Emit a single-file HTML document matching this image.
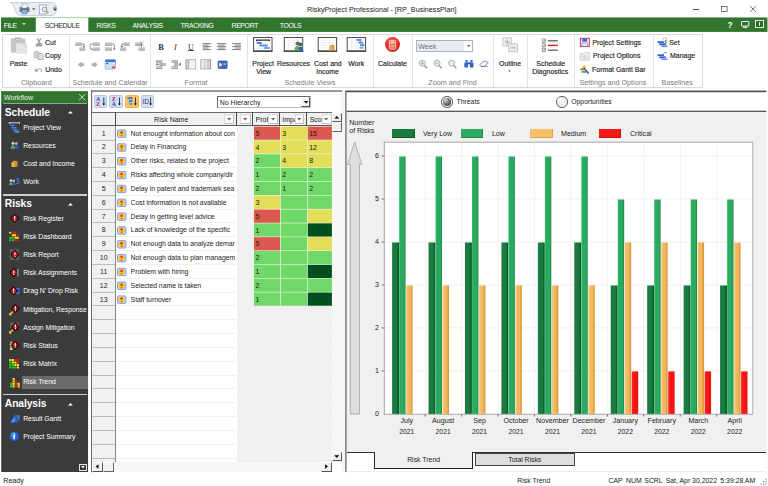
<!DOCTYPE html>
<html><head><meta charset="utf-8"><title>RiskyProject Professional - [RP_BusinessPlan]</title>
<style>
html,body{margin:0;padding:0;}
body{width:768px;height:486px;position:relative;overflow:hidden;background:#fff;font-family:"Liberation Sans",sans-serif;}
div{position:absolute;box-sizing:border-box;}
.t{white-space:nowrap;height:12px;line-height:12px;}
svg{position:absolute;overflow:visible;}
</style></head><body>

<svg style="left:8px;top:1px" width="52" height="16" viewBox="0 0 52 16"><path d="M2.5 1.5 H43 Q48.5 1.5 48.5 8 Q48.5 14.5 43 14.5 H12.5 Q9 14.5 7.5 10 Q6 3.5 2.5 1.5Z" fill="#e8edf4" stroke="#bcc5d2" stroke-width="0.8"/><rect x="11.6" y="6" width="9.8" height="5.2" rx="1" fill="#6f7784"/><rect x="14" y="3" width="5" height="4" fill="#f4f6fa" stroke="#8892a2" stroke-width="0.5"/><rect x="14" y="9" width="5" height="4" fill="#7fb4ee" stroke="#6a7688" stroke-width="0.4"/><path d="M24 7.3h3.6l-1.8 1.9z" fill="#666"/><rect x="31.5" y="4" width="7" height="9" fill="#fdfdfd" stroke="#8a98b4" stroke-width="0.7"/><circle cx="36.5" cy="8.5" r="2.4" fill="#dfeefc" stroke="#6a7890" stroke-width="0.7"/><path d="M38.2 10.3l2 2" stroke="#e8a030" stroke-width="1.3"/><path d="M45.5 6.2h3M45.5 7.8h3l-1.5 2z" stroke="#444" stroke-width="0.6" fill="#444"/></svg>
<div class="t" style="left:307px;top:4px;font-size:7.2px;color:#222;width:148.5px;text-align:center;">RiskyProject Professional - [RP_BusinessPlan]</div>
<div style="left:693px;top:9px;width:6.2px;height:0.8px;background:#5a5a5a"></div>
<svg style="left:720.8px;top:5.8px" width="6.5" height="6" viewBox="0 0 6.5 6"><rect x="0.4" y="0.4" width="5.7" height="5.2" fill="none" stroke="#4a4a4a" stroke-width="0.75"/></svg>
<svg style="left:750px;top:5.8px" width="6" height="6" viewBox="0 0 6 6"><path d="M0 0L5.9 5.9M5.9 0L0 5.9" stroke="#444" stroke-width="0.75" fill="none"/></svg>
<svg style="left:0px;top:0px" width="768" height="40" viewBox="0 0 768 40"><rect x="1" y="17.45" width="766.5" height="14.45" fill="#31752f"/><rect x="35.8" y="17.4" width="52.5" height="16" fill="#fff"/><rect x="35.8" y="17.4" width="52.5" height="0.7" fill="#a4c8a2"/></svg>
<div class="t" style="left:-0.8px;top:20px;font-size:6.9px;color:#fff;width:22.1px;text-align:center;letter-spacing:-0.35px;">FILE</div>
<div class="t" style="left:40.4px;top:20px;font-size:6.9px;color:#222;width:43.4px;text-align:center;letter-spacing:-0.35px;">SCHEDULE</div>
<div class="t" style="left:92.5px;top:20px;font-size:6.9px;color:#fff;width:27.1px;text-align:center;letter-spacing:-0.35px;">RISKS</div>
<div class="t" style="left:128.3px;top:20px;font-size:6.9px;color:#fff;width:38.7px;text-align:center;letter-spacing:-0.35px;">ANALYSIS</div>
<div class="t" style="left:175.8px;top:20px;font-size:6.9px;color:#fff;width:42.2px;text-align:center;letter-spacing:-0.35px;">TRACKING</div>
<div class="t" style="left:227px;top:20px;font-size:6.9px;color:#fff;width:35.5px;text-align:center;letter-spacing:-0.35px;">REPORT</div>
<div class="t" style="left:274.8px;top:20px;font-size:6.9px;color:#fff;width:31.5px;text-align:center;letter-spacing:-0.35px;">TOOLS</div>
<svg style="left:22.2px;top:23.3px" width="4" height="2.5" viewBox="0 0 4 2.5"><path d="M0 0H4L2 2.5Z" fill="#b9d3b8"/></svg>
<div class="t" style="left:727.5px;top:19px;font-size:8.3px;color:#fff;width:5px;text-align:center;font-weight:bold;">?</div>
<svg style="left:740.5px;top:21px" width="9" height="7" viewBox="0 0 9 7"><rect x="0.5" y="0.5" width="7.4" height="4.6" rx="0.6" fill="#2d6f2c" stroke="#fff" stroke-width="1"/><path d="M4.2 5.2V6.4M2 6.6H6.4" stroke="#fff" stroke-width="0.9"/></svg>
<div style="left:754.7px;top:19.7px;width:9.6px;height:8.4px;border:1px solid #e4eee4;background:#2b6a2a"></div>
<div style="left:758.9px;top:21.6px;width:1.2px;height:4.8px;background:#f0e6b0"></div>
<div style="left:2px;top:34px;width:700.8px;height:53.7px;background:#fff;border:1px solid #dadada"></div>
<div style="left:69.3px;top:35px;width:1px;height:51.7px;background:#e4e4e4"></div>
<div style="left:149.8px;top:35px;width:1px;height:51.7px;background:#e4e4e4"></div>
<div style="left:247.2px;top:35px;width:1px;height:51.7px;background:#e4e4e4"></div>
<div style="left:373.1px;top:35px;width:1px;height:51.7px;background:#e4e4e4"></div>
<div style="left:412.4px;top:35px;width:1px;height:51.7px;background:#e4e4e4"></div>
<div style="left:493.1px;top:35px;width:1px;height:51.7px;background:#e4e4e4"></div>
<div style="left:527px;top:35px;width:1px;height:51.7px;background:#e4e4e4"></div>
<div style="left:574px;top:35px;width:1px;height:51.7px;background:#e4e4e4"></div>
<div style="left:652.6px;top:35px;width:1px;height:51.7px;background:#e4e4e4"></div>
<div class="t" style="left:15.6px;top:77px;font-size:7.2px;color:#7a7a7a;width:41.4px;text-align:center;">Clipboard</div>
<div class="t" style="left:68px;top:77px;font-size:7.2px;color:#7a7a7a;width:84px;text-align:center;">Schedule and Calendar</div>
<div class="t" style="left:178px;top:77px;font-size:7.2px;color:#7a7a7a;width:36px;text-align:center;">Format</div>
<div class="t" style="left:280px;top:77px;font-size:7.2px;color:#7a7a7a;width:60px;text-align:center;">Schedule Views</div>
<div class="t" style="left:423px;top:77px;font-size:7.2px;color:#7a7a7a;width:59px;text-align:center;">Zoom and Find</div>
<div class="t" style="left:573.5px;top:77px;font-size:7.2px;color:#7a7a7a;width:78.8px;text-align:center;">Settings and Options</div>
<div class="t" style="left:657.7px;top:77px;font-size:7.2px;color:#7a7a7a;width:39.0px;text-align:center;">Baselines</div>
<div class="t" style="left:5px;top:58px;font-size:6.95px;color:#1e1e1e;width:27px;text-align:center;-webkit-text-stroke:0.15px #1e1e1e;">Paste</div>
<div class="t" style="left:40px;top:37px;font-size:6.95px;color:#1e1e1e;width:21px;text-align:center;-webkit-text-stroke:0.15px #1e1e1e;">Cut</div>
<div class="t" style="left:40px;top:50px;font-size:6.95px;color:#1e1e1e;width:26px;text-align:center;-webkit-text-stroke:0.15px #1e1e1e;">Copy</div>
<div class="t" style="left:40px;top:64px;font-size:6.95px;color:#1e1e1e;width:27px;text-align:center;-webkit-text-stroke:0.15px #1e1e1e;">Undo</div>
<div class="t" style="left:247.5px;top:58px;font-size:6.95px;color:#1e1e1e;width:31.2px;text-align:center;-webkit-text-stroke:0.15px #1e1e1e;">Project</div>
<div class="t" style="left:250.7px;top:66px;font-size:6.95px;color:#1e1e1e;width:25.8px;text-align:center;-webkit-text-stroke:0.15px #1e1e1e;">View</div>
<div class="t" style="left:272.5px;top:58px;font-size:6.95px;color:#1e1e1e;width:42.0px;text-align:center;-webkit-text-stroke:0.15px #1e1e1e;">Resources</div>
<div class="t" style="left:308.7px;top:58px;font-size:6.95px;color:#1e1e1e;width:38.3px;text-align:center;-webkit-text-stroke:0.15px #1e1e1e;">Cost and</div>
<div class="t" style="left:311.2px;top:66px;font-size:6.95px;color:#1e1e1e;width:32.8px;text-align:center;-webkit-text-stroke:0.15px #1e1e1e;">Income</div>
<div class="t" style="left:342.5px;top:58px;font-size:6.95px;color:#1e1e1e;width:27.5px;text-align:center;-webkit-text-stroke:0.15px #1e1e1e;">Work</div>
<div class="t" style="left:373.2px;top:58px;font-size:6.95px;color:#1e1e1e;width:38.6px;text-align:center;-webkit-text-stroke:0.15px #1e1e1e;">Calculate</div>
<div class="t" style="left:493.2px;top:58px;font-size:6.95px;color:#1e1e1e;width:33.8px;text-align:center;-webkit-text-stroke:0.15px #1e1e1e;">Outline</div>
<div class="t" style="left:532px;top:58px;font-size:6.95px;color:#1e1e1e;width:37.5px;text-align:center;-webkit-text-stroke:0.15px #1e1e1e;">Schedule</div>
<div class="t" style="left:526.5px;top:66px;font-size:6.95px;color:#1e1e1e;width:47.5px;text-align:center;-webkit-text-stroke:0.15px #1e1e1e;">Diagnostics</div>
<div class="t" style="left:586.7px;top:37px;font-size:6.95px;color:#1e1e1e;width:60.0px;text-align:center;-webkit-text-stroke:0.15px #1e1e1e;">Project Settings</div>
<div class="t" style="left:586.7px;top:50px;font-size:6.95px;color:#1e1e1e;width:60.0px;text-align:center;-webkit-text-stroke:0.15px #1e1e1e;">Project Options</div>
<div class="t" style="left:586.7px;top:64px;font-size:6.95px;color:#1e1e1e;width:64.3px;text-align:center;-webkit-text-stroke:0.15px #1e1e1e;">Format Gantt Bar</div>
<div class="t" style="left:664.7px;top:37px;font-size:6.95px;color:#1e1e1e;width:19.5px;text-align:center;-webkit-text-stroke:0.15px #1e1e1e;">Set</div>
<div class="t" style="left:664.7px;top:50px;font-size:6.95px;color:#1e1e1e;width:35.8px;text-align:center;-webkit-text-stroke:0.15px #1e1e1e;">Manage</div>
<svg style="left:10px;top:36.5px" width="18" height="17" viewBox="0 0 18 17"><rect x="0.8" y="1.6" width="14.6" height="13.8" rx="0.8" fill="#c6c6c6"/><rect x="4.6" y="0.5" width="6.6" height="3" rx="1" fill="#b4b4b4"/><rect x="6" y="2" width="3.8" height="1" fill="#d8d8d8"/><path d="M6 6.2H14L16.8 8.8V16.2H6Z" fill="#e5e5e5" stroke="#cfcfcf" stroke-width="0.5"/><path d="M14 6.2V8.8H16.8" fill="none" stroke="#c4c4c4" stroke-width="0.5"/></svg>
<svg style="left:35.5px;top:37.5px" width="6" height="9" viewBox="0 0 6 9"><path d="M1.1 0.2L4.2 5.6M4.9 0.2L1.8 5.6" stroke="#a0a0a0" stroke-width="1.3" fill="none"/><circle cx="1.5" cy="7" r="1.3" fill="#b8b8b8" stroke="#8e8e8e" stroke-width="1"/><circle cx="4.6" cy="7" r="1.3" fill="#b8b8b8" stroke="#8e8e8e" stroke-width="1"/></svg>
<svg style="left:34px;top:51px" width="9" height="9" viewBox="0 0 9 9"><path d="M0.3 0.4H4L5.4 1.8V6.8H0.3Z" fill="#d4d4d4" stroke="#a8a8a8" stroke-width="0.7"/><path d="M4 2.5H7.6L9.1 4V8.6H4Z" fill="#dcdcdc" stroke="#a4a4a4" stroke-width="0.7"/></svg>
<svg style="left:34px;top:66.5px" width="9" height="6" viewBox="0 0 9 6"><path d="M1.2 1.2V4.4H4.4Z" fill="#8a8a8a"/><path d="M2.5 3.5Q5 0.8 7.2 2.2Q8.6 3.6 7 5.2" fill="none" stroke="#8a8a8a" stroke-width="0.8"/></svg>
<svg style="left:0px;top:0px" width="768" height="100" viewBox="0 0 768 100"><rect x="75.2" y="42.7" width="6.8" height="2.9" fill="#c6c6c6"/><rect x="75.2" y="44.8" width="6.8" height="0.8" fill="#969696"/><rect x="75.2" y="42.7" width="6.8" height="0.6" fill="#b0b0b0"/><rect x="79.4" y="47.6" width="5.9" height="2.9" fill="#c6c6c6"/><rect x="79.4" y="49.7" width="5.9" height="0.8" fill="#969696"/><rect x="79.4" y="47.6" width="5.9" height="0.6" fill="#b0b0b0"/><path d="M82 44H84V47" stroke="#666" stroke-width="0.7" fill="none"/><path d="M82.8 46.2L84 47.6L85.2 46.2Z" fill="#555"/><rect x="93" y="42.7" width="6.8" height="2.9" fill="#c6c6c6"/><rect x="93" y="44.8" width="6.8" height="0.8" fill="#969696"/><rect x="93" y="42.7" width="6.8" height="0.6" fill="#b0b0b0"/><rect x="93" y="47.6" width="6.8" height="2.9" fill="#c6c6c6"/><rect x="93" y="49.7" width="6.8" height="0.8" fill="#969696"/><rect x="93" y="47.6" width="6.8" height="0.6" fill="#b0b0b0"/><path d="M93 44H91.3Q90.2 44 90.2 45.3V48Q90.2 49.3 91.5 49.3H92" stroke="#666" stroke-width="0.7" fill="none"/><path d="M91.6 48.2L93 49.3L91.6 50.4Z" fill="#555"/><rect x="105" y="42.7" width="7" height="2.9" fill="#c6c6c6"/><rect x="105" y="44.8" width="7" height="0.8" fill="#969696"/><rect x="105" y="42.7" width="7" height="0.6" fill="#b0b0b0"/><rect x="105" y="47.6" width="7" height="2.9" fill="#c6c6c6"/><rect x="105" y="49.7" width="7" height="0.8" fill="#969696"/><rect x="105" y="47.6" width="7" height="0.6" fill="#b0b0b0"/><path d="M112 44H113.2Q114.3 44 114.3 45.3V49" stroke="#666" stroke-width="0.7" fill="none"/><path d="M113.1 48.6L114.3 50.2L115.4 48.6Z" fill="#555"/><rect x="123.7" y="42.7" width="6" height="2.9" fill="#c6c6c6"/><rect x="123.7" y="44.8" width="6" height="0.8" fill="#969696"/><rect x="123.7" y="42.7" width="6" height="0.6" fill="#b0b0b0"/><rect x="120.2" y="47.6" width="6" height="2.9" fill="#c6c6c6"/><rect x="120.2" y="49.7" width="6" height="0.8" fill="#969696"/><rect x="120.2" y="47.6" width="6" height="0.6" fill="#b0b0b0"/><path d="M123.7 44H121.8V46.8" stroke="#666" stroke-width="0.7" fill="none"/><path d="M120.7 46L121.8 47.6L122.9 46Z" fill="#555"/><rect x="135" y="42.7" width="7" height="2.9" fill="#c6c6c6"/><rect x="135" y="44.8" width="7" height="0.8" fill="#969696"/><rect x="135" y="42.7" width="7" height="0.6" fill="#b0b0b0"/><rect x="138.5" y="47.6" width="6.5" height="2.9" fill="#c6c6c6"/><rect x="138.5" y="49.7" width="6.5" height="0.8" fill="#969696"/><rect x="138.5" y="47.6" width="6.5" height="0.6" fill="#b0b0b0"/><path d="M141.5 44V47" stroke="#666" stroke-width="0.7" fill="none"/><path d="M139.8 41.5L143.8 45.2M143.8 41.5L139.8 45.2" stroke="#888" stroke-width="0.6"/><path d="M77.8 64.6L81.5 61.4V63.2H84V66H81.5V67.8Z" fill="#b0b0b0"/><path d="M97.8 64.6L94.1 61.4V63.2H91.6V66H94.1V67.8Z" fill="#b0b0b0"/><rect x="105.3" y="59.7" width="10.2" height="9.3" rx="0.8" fill="#dfe8f8" stroke="#7d9be0" stroke-width="0.7"/><rect x="105.3" y="59.7" width="10.2" height="2.4" fill="#3d72dc"/><path d="M108.7 62V69M112.1 62V69M105.5 64.4H115.3M105.5 66.7H115.3" stroke="#b5c6ea" stroke-width="0.5"/><rect x="106.3" y="62.8" width="1.8" height="1.3" fill="#2a58c8"/><rect x="112.3" y="66.3" width="2.6" height="2.1" fill="#e0483a"/></svg>
<div class="t" style="left:156px;top:42px;font-size:8.4px;color:#333;width:10px;text-align:center;font-family:&quot;Liberation Serif&quot;,serif;font-weight:bold;">B</div>
<div class="t" style="left:170.5px;top:42px;font-size:8.4px;color:#333;width:10px;text-align:center;font-family:&quot;Liberation Serif&quot;,serif;font-style:italic;">I</div>
<div class="t" style="left:186px;top:42px;font-size:8.0px;color:#333;width:10px;text-align:center;font-family:&quot;Liberation Serif&quot;,serif;">U</div>
<div style="left:188.3px;top:50.3px;width:5.6px;height:0.7px;background:#444"></div>
<svg style="left:0px;top:0px" width="768" height="100" viewBox="0 0 768 100"><rect x="202.7" y="43.0" width="8.5" height="1.1" fill="#8e8e8e"/><rect x="202.7" y="44.5" width="5.95" height="1.1" fill="#8e8e8e"/><rect x="202.7" y="46.0" width="8.5" height="1.1" fill="#8e8e8e"/><rect x="202.7" y="47.5" width="5.95" height="1.1" fill="#8e8e8e"/><rect x="202.7" y="49.0" width="8.5" height="1.1" fill="#8e8e8e"/><rect x="217.0" y="43.0" width="9.2" height="1.1" fill="#8e8e8e"/><rect x="218.38" y="44.5" width="6.44" height="1.1" fill="#8e8e8e"/><rect x="217.0" y="46.0" width="9.2" height="1.1" fill="#8e8e8e"/><rect x="218.38" y="47.5" width="6.44" height="1.1" fill="#8e8e8e"/><rect x="217.0" y="49.0" width="9.2" height="1.1" fill="#8e8e8e"/><rect x="232.0" y="43.0" width="8.9" height="1.1" fill="#8e8e8e"/><rect x="234.67" y="44.5" width="6.23" height="1.1" fill="#8e8e8e"/><rect x="232.0" y="46.0" width="8.9" height="1.1" fill="#8e8e8e"/><rect x="234.67" y="47.5" width="6.23" height="1.1" fill="#8e8e8e"/><rect x="232.0" y="49.0" width="8.9" height="1.1" fill="#8e8e8e"/><rect x="156" y="60" width="6.5" height="2.6" fill="#c6c6c6"/><rect x="156" y="61.8" width="6.5" height="0.8" fill="#969696"/><rect x="156" y="60" width="6.5" height="0.6" fill="#b0b0b0"/><rect x="159.5" y="63" width="6.5" height="2.6" fill="#c6c6c6"/><rect x="159.5" y="64.8" width="6.5" height="0.8" fill="#969696"/><rect x="159.5" y="63" width="6.5" height="0.6" fill="#b0b0b0"/><rect x="156" y="66.2" width="6.5" height="2.6" fill="#c6c6c6"/><rect x="156" y="68.0" width="6.5" height="0.8" fill="#969696"/><rect x="156" y="66.2" width="6.5" height="0.6" fill="#b0b0b0"/><path d="M156 64.3H159.2M157 63.2V65.4" stroke="#333" stroke-width="0.6"/><rect x="171.5" y="60" width="6.5" height="2.6" fill="#c6c6c6"/><rect x="171.5" y="61.8" width="6.5" height="0.8" fill="#969696"/><rect x="171.5" y="60" width="6.5" height="0.6" fill="#b0b0b0"/><rect x="174" y="63" width="4.5" height="2.6" fill="#c6c6c6"/><rect x="174" y="64.8" width="4.5" height="0.8" fill="#969696"/><rect x="174" y="63" width="4.5" height="0.6" fill="#b0b0b0"/><rect x="171.5" y="66.2" width="6.5" height="2.6" fill="#c6c6c6"/><rect x="171.5" y="68.0" width="6.5" height="0.8" fill="#969696"/><rect x="171.5" y="66.2" width="6.5" height="0.6" fill="#b0b0b0"/><path d="M181 62.6L178.6 64.3L181 66Z" fill="#777"/><rect x="185.9" y="59.9" width="9.8" height="9" fill="#dadada" stroke="#8a8a8a" stroke-width="0.8"/><rect x="188.6" y="60.199999999999996" width="6.8" height="8.4" fill="#f2f2f2"/><path d="M188.6 59.9V68.9" stroke="#8a8a8a" stroke-width="0.6"/><rect x="200.9" y="59.9" width="9.8" height="9" fill="#dadada" stroke="#8a8a8a" stroke-width="0.8"/><rect x="201.20000000000002" y="60.199999999999996" width="6.6" height="8.4" fill="#ececec"/><path d="M207.9 59.9V68.9M204.9 59.9V68.9" stroke="#9a9a9a" stroke-width="0.6"/><rect x="218.1" y="61" width="9" height="7.4" rx="0.6" fill="#4668b4" stroke="#2c4a94" stroke-width="0.7"/><path d="M219.3 62.3L222.3 64.7L219.3 67.2Z" fill="#f4f7ff"/><rect x="223.4" y="63" width="2.6" height="2.2" fill="#6fa8ff"/></svg>
<svg style="left:0px;top:0px" width="768" height="100" viewBox="0 0 768 100"><rect x="253.6" y="37.5" width="18.4" height="13.6" fill="#fff" stroke="#484848" stroke-width="1"/><rect x="253.1" y="50.5" width="19.4" height="1.3" fill="#3c3c3c"/><path d="M259.1 37.6V50.4" stroke="#e1e1e1" stroke-width="0.5"/><path d="M265.1 37.6V50.4" stroke="#e1e1e1" stroke-width="0.5"/><path d="M254.1 43.5H271.5" stroke="#e1e1e1" stroke-width="0.5"/><path d="M254.1 46H271.5" stroke="#e1e1e1" stroke-width="0.5"/><path d="M254.1 48.5H271.5" stroke="#e1e1e1" stroke-width="0.5"/><path d="M256 39.6H270V40.8L269.3 41.6L268.6 40.8H257.4L256.7 41.6L256 40.8Z" fill="#2a2a2a"/><rect x="256.8" y="41.9" width="5" height="2" rx="0.4" fill="#4a82ea"/><rect x="259.4" y="44.5" width="8.4" height="1.9" rx="0.4" fill="#5a8eee"/><rect x="264" y="47" width="6" height="2" rx="0.4" fill="#70a0f2"/><rect x="284.3" y="37.5" width="18.4" height="13.6" fill="#fff" stroke="#484848" stroke-width="1"/><rect x="283.8" y="50.5" width="19.4" height="1.3" fill="#3c3c3c"/><path d="M288.8 37.6V50.4" stroke="#e1e1e1" stroke-width="0.5"/><path d="M293.8 37.6V50.4" stroke="#e1e1e1" stroke-width="0.5"/><path d="M298.8 37.6V50.4" stroke="#e1e1e1" stroke-width="0.5"/><path d="M284.8 40.2H302.2" stroke="#e1e1e1" stroke-width="0.5"/><path d="M284.8 42.8H302.2" stroke="#e1e1e1" stroke-width="0.5"/><path d="M284.8 45.4H302.2" stroke="#e1e1e1" stroke-width="0.5"/><path d="M284.8 48H302.2" stroke="#e1e1e1" stroke-width="0.5"/><circle cx="297.5" cy="43.6" r="2" fill="#6a6a6a"/><circle cx="300.3" cy="44.4" r="1.8" fill="#555"/><path d="M294.5 50.2Q294.5 46 297.6 46Q300 46 300.3 50.2Z" fill="#54b848"/><path d="M298.3 50.2Q298.5 46.6 300.6 46.6Q302.8 46.8 302.8 50.2Z" fill="#2f5fd0"/><rect x="318.2" y="37.5" width="18.4" height="13.6" fill="#fff" stroke="#484848" stroke-width="1"/><rect x="317.7" y="50.5" width="19.4" height="1.3" fill="#3c3c3c"/><path d="M323.7 37.6V50.4" stroke="#e1e1e1" stroke-width="0.5"/><path d="M329.7 37.6V50.4" stroke="#e1e1e1" stroke-width="0.5"/><path d="M318.7 40.2H336.09999999999997" stroke="#e1e1e1" stroke-width="0.5"/><path d="M318.7 42.8H336.09999999999997" stroke="#e1e1e1" stroke-width="0.5"/><path d="M318.7 45.4H336.09999999999997" stroke="#e1e1e1" stroke-width="0.5"/><path d="M318.7 48H336.09999999999997" stroke="#e1e1e1" stroke-width="0.5"/><path d="M329.5 46.2L332.2 44.6L334.3 45.3V50.2H329.5Z" fill="#d49a28"/><path d="M329.5 46.2H332.2V50.2H329.5Z" fill="#e8b848"/><rect x="347.2" y="37.5" width="18.4" height="13.6" fill="#fff" stroke="#484848" stroke-width="1"/><rect x="346.7" y="50.5" width="19.4" height="1.3" fill="#3c3c3c"/><path d="M351.7 37.6V50.4" stroke="#e1e1e1" stroke-width="0.5"/><path d="M356.7 37.6V50.4" stroke="#e1e1e1" stroke-width="0.5"/><path d="M347.7 40.2H365.09999999999997" stroke="#e1e1e1" stroke-width="0.5"/><path d="M347.7 42.8H365.09999999999997" stroke="#e1e1e1" stroke-width="0.5"/><path d="M347.7 45.4H365.09999999999997" stroke="#e1e1e1" stroke-width="0.5"/><path d="M347.7 48H365.09999999999997" stroke="#e1e1e1" stroke-width="0.5"/><rect x="356.7" y="39" width="4.7" height="1.9" fill="#4f86e8"/><rect x="358.5" y="41.6" width="4.6" height="1.9" fill="#4f86e8"/><rect x="360.2" y="44.2" width="4.2" height="1.9" fill="#4f86e8"/><rect x="359.5" y="46.8" width="4" height="1.9" fill="#78a6f2"/></svg>
<div style="left:384.8px;top:36.8px;width:15px;height:15px;border-radius:50%;background:radial-gradient(circle at 45% 35%,#ff6a55 0,#e53324 45%,#c81f14 100%);"></div>
<svg style="left:388.8px;top:39.8px" width="7" height="9.6" viewBox="0 0 7 9.6"><rect x="0.4" y="0.4" width="6.2" height="8.8" rx="0.8" fill="none" stroke="#ffe9e4" stroke-width="0.8"/><rect x="1.5" y="1.6" width="4" height="1.8" fill="#ffe9e4"/><path d="M1.4 5.1H5.6M1.4 6.6H5.6M1.4 8H5.6" stroke="#ffd8d0" stroke-width="0.8"/></svg>
<div style="left:416.2px;top:40.3px;width:56.5px;height:12px;background:#fff;border:1px solid #aab3c6"></div>
<div style="left:417.2px;top:41.3px;width:47px;height:10px;background:#e9ecf1"></div>
<div class="t" style="left:418.3px;top:41px;font-size:7.1px;color:#707070;">Week</div>
<svg style="left:466.7px;top:45.2px" width="3.6" height="2" viewBox="0 0 3.6 2"><path d="M0 0H3.6L1.8 2Z" fill="#666"/></svg>
<svg style="left:0px;top:0px" width="768" height="100" viewBox="0 0 768 100"><circle cx="422.3" cy="63.2" r="3" fill="#ececec" stroke="#a8a8a8" stroke-width="0.9"/><path d="M424.5 65.6L426.90000000000003 68.2" stroke="#9a9a9a" stroke-width="1.5"/><path d="M420.7 63.2H423.90000000000003M422.3 61.6V64.8" stroke="#999" stroke-width="0.7"/><circle cx="437" cy="63.2" r="3" fill="#ececec" stroke="#a8a8a8" stroke-width="0.9"/><path d="M439.2 65.6L441.6 68.2" stroke="#9a9a9a" stroke-width="1.5"/><path d="M435.4 63.2H438.6" stroke="#999" stroke-width="0.7"/><circle cx="451.6" cy="63.2" r="3" fill="#ececec" stroke="#a8a8a8" stroke-width="0.9"/><path d="M453.8 65.6L456.20000000000005 68.2" stroke="#9a9a9a" stroke-width="1.5"/><rect x="464.3" y="62.8" width="3.7" height="4.6" rx="0.9" fill="#2f62c4"/><rect x="469.8" y="62.8" width="3.7" height="4.6" rx="0.9" fill="#2f62c4"/><rect x="465.3" y="59.9" width="2.4" height="3.4" fill="#4a7ad8"/><rect x="470.2" y="59.9" width="2.4" height="3.4" fill="#4a7ad8"/><rect x="467.6" y="62.4" width="2.6" height="1.8" fill="#2a4f9f"/><path d="M479.6 64.8L484 60.8L488.4 62.6L484.3 66.4H481Z" fill="#f6f8ff" stroke="#5560a8" stroke-width="0.7"/><path d="M481 66.5H488" stroke="#5560a8" stroke-width="0.6"/><rect x="502.9" y="37.8" width="8.6" height="8.2" fill="#f0f0f0" stroke="#b9b9b9" stroke-width="0.7"/><path d="M504.6 41.9H509.8M507.2 39.4V44.4" stroke="#9a9a9a" stroke-width="0.8"/><rect x="508.8" y="43.8" width="8.8" height="8" fill="#ececec" stroke="#b4b4b4" stroke-width="0.7"/><path d="M510.8 47.8H515.8" stroke="#9a9a9a" stroke-width="0.8"/><path d="M507.8 70.3H511.2L509.5 72.2Z" fill="#888"/><path d="M547.8 40.7H557.8M547.8 50.3H557.8" stroke="#777" stroke-width="1.4"/><path d="M547.8 45.4H557.8" stroke="#e0252b" stroke-width="1.5"/><rect x="542.2" y="38.9" width="3.4" height="3.4" fill="#fff" stroke="#777" stroke-width="0.6"/><path d="M543 40.6L543.8 41.5L545.4 39.199999999999996" stroke="#444" stroke-width="0.6" fill="none"/><rect x="542.2" y="43.7" width="3.4" height="3.4" fill="#fff" stroke="#777" stroke-width="0.6"/><path d="M543 45.400000000000006L543.8 46.300000000000004L545.4 44.0" stroke="#444" stroke-width="0.6" fill="none"/><rect x="542.2" y="48.5" width="3.4" height="3.4" fill="#fff" stroke="#777" stroke-width="0.6"/><path d="M543 50.2L543.8 51.1L545.4 48.8" stroke="#444" stroke-width="0.6" fill="none"/><rect x="580.3" y="38.3" width="9" height="8.2" fill="#e9eefc" stroke="#d02838" stroke-width="0.9"/><rect x="582.3" y="38.6" width="4.8" height="3" fill="#3b5fd0"/><rect x="582" y="43" width="5.6" height="3.2" fill="#f4f4f4" stroke="#3b5fd0" stroke-width="0.5"/><path d="M580.3 53.6H584L585 52.6H589.4V60.2H580.3Z" fill="#f2f2f2" stroke="#b5b5b5" stroke-width="0.6"/><path d="M582 56H588M582 57.8H588M584.8 54.5V59.5" stroke="#c2c6d2" stroke-width="0.6"/><circle cx="584" cy="67.3" r="1.8" fill="#f4c430"/><path d="M580.2 68.6H584.5V70.2H580.2Z" fill="#e04a3a"/><path d="M581.5 71H586.5V72.8H581.5Z" fill="#4fb04a"/><path d="M584.3 67.5L589.2 73L588 74L583.3 68.6Z" fill="#3355b8"/><rect x="657.5" y="41.2" width="6.5" height="1.9" fill="#2f66d6"/><rect x="659.3" y="43.4" width="6.4" height="1.9" fill="#2f66d6"/><rect x="661.5" y="45.5" width="6" height="1.6" fill="#5a8ae6"/><rect x="663" y="37.9" width="3.6" height="3.6" fill="#f4faf4" stroke="#7fae7a" stroke-width="0.5"/><path d="M665.8 40V44.5" stroke="#222" stroke-width="0.7"/><rect x="657.5" y="54.3" width="6.5" height="1.9" fill="#2f66d6"/><rect x="659.3" y="56.4" width="6.4" height="1.9" fill="#2f66d6"/><rect x="661.5" y="58.4" width="6" height="1.5" fill="#5a8ae6"/><path d="M663.3 53.8Q664.8 51.4 667 53" stroke="#444" stroke-width="0.6" fill="none"/></svg>
<div style="left:1.2px;top:90.8px;width:86.5px;height:380.8px;background:#3b3b3b;border-left:1px solid #6a6a6a"></div>
<div style="left:1.2px;top:90.8px;width:86.5px;height:12.2px;background:#31752f;border-left:1px solid #5c8c5a;border-top:1px solid #4f8a4c"></div>
<div style="left:2.5px;top:103px;width:84.5px;height:1.1px;background:#93a893"></div>
<div class="t" style="left:4px;top:92px;font-size:7.1px;color:#eaf4ea;">Workflow</div>
<svg style="left:78.8px;top:94px" width="6.2" height="6.2" viewBox="0 0 6.2 6.2"><path d="M0 0L6.2 6.2M6.2 0L0 6.2" stroke="#e6efe6" stroke-width="0.8" fill="none"/></svg>
<div class="t" style="left:4.8px;top:106px;font-size:10.3px;color:#fff;font-weight:bold;letter-spacing:-0.1px;transform:translateY(0.7px);">Schedule</div>
<svg style="left:67.6px;top:111.3px" width="4.8" height="2.6" viewBox="0 0 4.8 2.6"><path d="M0 2.6H4.8L2.4 0Z" fill="#fff"/></svg>
<div class="t" style="left:4.8px;top:197px;font-size:10.3px;color:#fff;font-weight:bold;letter-spacing:-0.1px;transform:translateY(0.7px);">Risks</div>
<svg style="left:67.6px;top:202.5px" width="4.8" height="2.6" viewBox="0 0 4.8 2.6"><path d="M0 2.6H4.8L2.4 0Z" fill="#fff"/></svg>
<div class="t" style="left:4.8px;top:397px;font-size:10.3px;color:#fff;font-weight:bold;letter-spacing:-0.1px;transform:translateY(0.7px);">Analysis</div>
<svg style="left:67.6px;top:402.7px" width="4.8" height="2.6" viewBox="0 0 4.8 2.6"><path d="M0 2.6H4.8L2.4 0Z" fill="#fff"/></svg>
<div style="left:3px;top:194.4px;width:83.5px;height:1.3px;background:#cfcfcf"></div>
<div style="left:3px;top:393.8px;width:83.5px;height:1.3px;background:#cfcfcf"></div>
<div style="left:21.8px;top:375.6px;width:65.9px;height:13.7px;background:#6b6b6b"></div>
<div class="t" style="left:23.2px;top:122px;font-size:6.9px;color:#fff;letter-spacing:-0.04px;">Project View</div>
<div class="t" style="left:23.2px;top:140px;font-size:6.9px;color:#fff;letter-spacing:-0.04px;">Resources</div>
<div class="t" style="left:23.2px;top:158px;font-size:6.9px;color:#fff;letter-spacing:-0.04px;">Cost and Income</div>
<div class="t" style="left:23.2px;top:176px;font-size:6.9px;color:#fff;letter-spacing:-0.04px;">Work</div>
<div class="t" style="left:23.2px;top:213px;font-size:6.9px;color:#fff;letter-spacing:-0.04px;">Risk Register</div>
<div class="t" style="left:23.2px;top:231px;font-size:6.9px;color:#fff;letter-spacing:-0.04px;">Risk Dashboard</div>
<div class="t" style="left:23.2px;top:249px;font-size:6.9px;color:#fff;letter-spacing:-0.04px;">Risk Report</div>
<div class="t" style="left:23.2px;top:267px;font-size:6.9px;color:#fff;letter-spacing:-0.04px;">Risk Assignments</div>
<div class="t" style="left:23.2px;top:285px;font-size:6.9px;color:#fff;letter-spacing:-0.04px;">Drag N' Drop Risk</div>
<div class="t" style="left:23.2px;top:304px;font-size:6.9px;color:#fff;letter-spacing:-0.04px;">Mitigation, Response</div>
<div class="t" style="left:23.2px;top:322px;font-size:6.9px;color:#fff;letter-spacing:-0.04px;">Assign Mitigation</div>
<div class="t" style="left:23.2px;top:340px;font-size:6.9px;color:#fff;letter-spacing:-0.04px;">Risk Status</div>
<div class="t" style="left:23.2px;top:358px;font-size:6.9px;color:#fff;letter-spacing:-0.04px;">Risk Matrix</div>
<div class="t" style="left:23.2px;top:376px;font-size:6.9px;color:#fff;letter-spacing:-0.04px;">Risk Trend</div>
<div class="t" style="left:23.2px;top:413px;font-size:6.9px;color:#fff;letter-spacing:-0.04px;">Result Gantt</div>
<div class="t" style="left:23.2px;top:431px;font-size:6.9px;color:#fff;letter-spacing:-0.04px;">Project Summary</div>
<div class="t" style="left:3.3px;top:475px;font-size:7.1px;color:#222;">Ready</div>
<div style="left:79.3px;top:463.6px;width:7.6px;height:7.6px;border:1px solid #e8e8e8;background:#3b3b3b"></div>
<svg style="left:81.1px;top:466.4px" width="4" height="2.3" viewBox="0 0 4 2.3"><path d="M0 0H4L2 2.3Z" fill="#fff"/></svg>
<svg style="left:0px;top:0px" width="100" height="486" viewBox="0 0 100 486"><defs><radialGradient id="dg"><stop offset="0" stop-color="#cc2024"/><stop offset="1" stop-color="#8a0a0e"/></radialGradient></defs><path d="M9.3 122.8H19.4M9.3 122.2V124M19.4 122.2V124" stroke="#fff" stroke-width="0.8" fill="none"/><rect x="10" y="124.6" width="4.6" height="1.7" fill="#3f78e4"/><rect x="11.5" y="126.9" width="5" height="1.7" fill="#3f78e4"/><rect x="13" y="129.2" width="5.4" height="1.7" fill="#3f78e4"/><rect x="14.6" y="131.2" width="5" height="1.4" fill="#6c9af0"/><circle cx="13" cy="143.3" r="1.5" fill="#d0d0d0"/><circle cx="16.3" cy="143.6" r="1.4" fill="#b8b8c8"/><path d="M10.7 148.8Q10.7 145.2 13 145.2Q15 145.2 15.1 148.8Z" fill="#4fb848"/><path d="M14.4 148.8Q14.6 145.6 16.6 145.6Q18.8 145.8 18.8 148.8Z" fill="#2c5fd6"/><path d="M11.6 162.6L14 160.6L17.6 161.2V166.4L14.5 167H11.6Z" fill="#c8922a"/><path d="M11.6 162.6H14.6V167H11.6Z" fill="#e6b84c"/><circle cx="11" cy="180.6" r="1.4" fill="#d0d0d0"/><circle cx="13.8" cy="180.9" r="1.3" fill="#b8b8c8"/><path d="M9 185Q9 182.3 11 182.3Q12.8 182.3 12.9 185Z" fill="#4fb848"/><path d="M12.3 185Q12.5 182.6 14.1 182.6Q15.8 182.8 15.8 185Z" fill="#2c5fd6"/><rect x="16.2" y="178.4" width="3" height="1.4" fill="#3f78e4"/><rect x="17" y="180.6" width="2.4" height="1.4" fill="#3f78e4"/><rect x="16.4" y="182.8" width="3" height="1.4" fill="#3f78e4"/><path d="M14.7 214.10000000000002L18.9 218.3L14.7 222.5L10.5 218.3Z" fill="url(#dg)" stroke="#100000" stroke-width="1"/><path d="M14.7 216.0V218.9" stroke="#fff" stroke-width="1.1"/><rect x="14.149999999999999" y="219.60000000000002" width="1.1" height="1.1" fill="#fff"/><rect x="9.1" y="231.7" width="2.1" height="2" rx="0.4" fill="#f2e21e"/><rect x="12.2" y="231.7" width="3.9" height="2" rx="0.4" fill="#e41c1c"/><rect x="11.8" y="234.2" width="4.3" height="2" rx="0.4" fill="#f2e21e"/><rect x="16.9" y="234.2" width="1.9" height="2" rx="0.4" fill="#e41c1c"/><rect x="9.1" y="236.7" width="4.7" height="2" rx="0.4" fill="#22cc22"/><rect x="14.5" y="236.7" width="4.3" height="2" rx="0.4" fill="#f2e21e"/><rect x="9.1" y="239.2" width="2.0" height="2" rx="0.4" fill="#22cc22"/><rect x="11.8" y="239.2" width="2.0" height="2" rx="0.4" fill="#22cc22"/><rect x="14.5" y="239.2" width="1.6" height="2" rx="0.4" fill="#e41c1c"/><rect x="16.9" y="239.2" width="1.9" height="2" rx="0.4" fill="#e41c1c"/><rect x="10" y="249.8" width="8.8" height="9.6" fill="#555" stroke="#777" stroke-width="0.5"/><path d="M14.9 250.3L19.1 254.5L14.9 258.7L10.7 254.5Z" fill="url(#dg)" stroke="#100000" stroke-width="1"/><path d="M14.9 252.2V255.1" stroke="#fff" stroke-width="1.1"/><rect x="14.35" y="255.8" width="1.1" height="1.1" fill="#fff"/><path d="M13.8 268.40000000000003L18.0 272.6L13.8 276.8L9.600000000000001 272.6Z" fill="url(#dg)" stroke="#100000" stroke-width="1"/><path d="M13.8 270.3V273.20000000000005" stroke="#fff" stroke-width="1.1"/><rect x="13.25" y="273.90000000000003" width="1.1" height="1.1" fill="#fff"/><rect x="17" y="269.2" width="1.6" height="7" fill="#8c8c8c"/><rect x="15" y="287.9" width="4.6" height="6.2" fill="#3470e2"/><rect x="17.6" y="290.4" width="1.2" height="1" fill="#1a2a60"/><path d="M13.6 286.6L17.8 290.8L13.6 295.0L9.399999999999999 290.8Z" fill="url(#dg)" stroke="#100000" stroke-width="1"/><path d="M13.6 288.5V291.40000000000003" stroke="#fff" stroke-width="1.1"/><rect x="13.049999999999999" y="292.1" width="1.1" height="1.1" fill="#fff"/><path d="M15.4 304.6L19.4 308.6L15.4 312.6L11.4 308.6Z" fill="url(#dg)" stroke="#100000" stroke-width="1"/><path d="M15.4 306.3V309.20000000000005" stroke="#fff" stroke-width="1.1"/><rect x="14.85" y="309.90000000000003" width="1.1" height="1.1" fill="#fff"/><path d="M13 311.5L9.8 314.6" stroke="#f0e020" stroke-width="1.3"/><path d="M9.2 312.4V315.2H12Z" fill="#f0e020"/><rect x="10.2" y="322.6" width="8.8" height="5.4" fill="#666"/><path d="M15.4 322.8L19.4 326.8L15.4 330.8L11.4 326.8Z" fill="url(#dg)" stroke="#100000" stroke-width="1"/><path d="M15.4 324.5V327.40000000000003" stroke="#fff" stroke-width="1.1"/><rect x="14.85" y="328.1" width="1.1" height="1.1" fill="#fff"/><path d="M13 329.7L9.8 332.8" stroke="#f0e020" stroke-width="1.3"/><path d="M9.2 330.6V333.4H12Z" fill="#f0e020"/><rect x="9.9" y="341.4" width="2.5" height="2" fill="#d47474"/><rect x="9.9" y="343.6" width="2.5" height="2" fill="#d8d060"/><rect x="9.9" y="345.8" width="2.5" height="2" fill="#62c872"/><rect x="9.9" y="348" width="2.5" height="2" fill="#e8d850"/><path d="M15.2 341.3L19.2 345.3L15.2 349.3L11.2 345.3Z" fill="url(#dg)" stroke="#100000" stroke-width="1"/><path d="M15.2 343.0V345.90000000000003" stroke="#fff" stroke-width="1.1"/><rect x="14.649999999999999" y="346.6" width="1.1" height="1.1" fill="#fff"/><rect x="9.2" y="358.9" width="2.25" height="2.2" rx="0.4" fill="#f2e21e"/><rect x="11.73" y="358.9" width="2.25" height="2.2" rx="0.4" fill="#f2e21e"/><rect x="14.26" y="358.9" width="2.25" height="2.2" rx="0.4" fill="#e41c1c"/><rect x="16.79" y="358.9" width="2.25" height="2.2" rx="0.4" fill="#e41c1c"/><rect x="9.2" y="361.4" width="2.25" height="2.2" rx="0.4" fill="#22cc22"/><rect x="11.73" y="361.4" width="2.25" height="2.2" rx="0.4" fill="#f2e21e"/><rect x="14.26" y="361.4" width="2.25" height="2.2" rx="0.4" fill="#f2e21e"/><rect x="16.79" y="361.4" width="2.25" height="2.2" rx="0.4" fill="#e41c1c"/><rect x="9.2" y="363.9" width="2.25" height="2.2" rx="0.4" fill="#22cc22"/><rect x="11.73" y="363.9" width="2.25" height="2.2" rx="0.4" fill="#22cc22"/><rect x="14.26" y="363.9" width="2.25" height="2.2" rx="0.4" fill="#f2e21e"/><rect x="16.79" y="363.9" width="2.25" height="2.2" rx="0.4" fill="#f2e21e"/><rect x="9.2" y="366.4" width="2.25" height="2.2" rx="0.4" fill="#22cc22"/><rect x="11.73" y="366.4" width="2.25" height="2.2" rx="0.4" fill="#22cc22"/><rect x="14.26" y="366.4" width="2.25" height="2.2" rx="0.4" fill="#22cc22"/><rect x="16.79" y="366.4" width="2.25" height="2.2" rx="0.4" fill="#f2e21e"/><rect x="10.0" y="385.3" width="2.25" height="2.15" rx="0.4" fill="#22cc22"/><rect x="10.0" y="382.85" width="2.25" height="2.15" rx="0.4" fill="#22cc22"/><rect x="12.53" y="385.3" width="2.25" height="2.15" rx="0.4" fill="#f2e21e"/><rect x="12.53" y="382.85" width="2.25" height="2.15" rx="0.4" fill="#f2e21e"/><rect x="12.53" y="380.4" width="2.25" height="2.15" rx="0.4" fill="#f2e21e"/><rect x="12.53" y="377.95" width="2.25" height="2.15" rx="0.4" fill="#f2e21e"/><rect x="15.06" y="385.3" width="2.25" height="2.15" rx="0.4" fill="#e41c1c"/><rect x="15.06" y="382.85" width="2.25" height="2.15" rx="0.4" fill="#e41c1c"/><rect x="15.06" y="380.4" width="2.25" height="2.15" rx="0.4" fill="#e41c1c"/><rect x="17.59" y="385.3" width="2.25" height="2.15" rx="0.4" fill="#f2e21e"/><rect x="17.59" y="382.85" width="2.25" height="2.15" rx="0.4" fill="#f2e21e"/><path d="M9.4 422.6Q12.9 419.6 14.8 414.7L15.5 414.7Q16.3 419 18 422.6Z" fill="#1f66e0"/><path d="M11.2 422Q13.4 419.6 14.8 416.2Q14.8 420.6 14.2 422.2Z" fill="#5aa6f8"/><rect x="16.3" y="415.3" width="3.4" height="1.5" fill="#4c84ec"/><rect x="16.9" y="417.5" width="2.8" height="1.4" fill="#4c84ec"/><rect x="17.6" y="419.6" width="2.1" height="1.3" fill="#3c70dc"/><circle cx="14.4" cy="436.6" r="4.6" fill="#1c62d4"/><circle cx="13.4" cy="435" r="2.8" fill="#5aa4f6" opacity="0.55"/><path d="M13.4 435.6H14.9V439.2H13.4Z" fill="#fff"/><path d="M12.9 435.6H14.9V436.3H12.9Z" fill="#fff"/><circle cx="14.2" cy="434" r="0.8" fill="#fff"/></svg>
<div style="left:91px;top:90.4px;width:251.2px;height:381.8px;background:#fff;border-right:1px solid #f4f4f4;border-bottom:1px solid #efefef"></div>
<div style="left:342.2px;top:91px;width:2.6px;height:381px;background:#f6f6f6"></div>
<svg style="left:0px;top:0px" width="768" height="486" viewBox="0 0 768 486"><rect x="91" y="90.25" width="251.2" height="1.55" fill="#7c7c7c"/><rect x="91" y="90.25" width="1.2" height="382" fill="#6e6e6e"/></svg>
<div style="left:92.2px;top:112px;width:23.0px;height:349.7px;background:#f0f0f0"></div>
<div style="left:236.6px;top:125.3px;width:95.3px;height:336.4px;background:#f0f0f0"></div>
<div style="left:92.2px;top:139.5px;width:23.0px;height:1px;background:#bcbcbc"></div>
<div style="left:115.2px;top:139.5px;width:121.4px;height:1px;background:#f1f1f1"></div>
<div style="left:92.2px;top:153.33px;width:23.0px;height:1px;background:#bcbcbc"></div>
<div style="left:115.2px;top:153.33px;width:121.4px;height:1px;background:#f1f1f1"></div>
<div style="left:92.2px;top:167.16px;width:23.0px;height:1px;background:#bcbcbc"></div>
<div style="left:115.2px;top:167.16px;width:121.4px;height:1px;background:#f1f1f1"></div>
<div style="left:92.2px;top:180.99px;width:23.0px;height:1px;background:#bcbcbc"></div>
<div style="left:115.2px;top:180.99px;width:121.4px;height:1px;background:#f1f1f1"></div>
<div style="left:92.2px;top:194.82px;width:23.0px;height:1px;background:#bcbcbc"></div>
<div style="left:115.2px;top:194.82px;width:121.4px;height:1px;background:#f1f1f1"></div>
<div style="left:92.2px;top:208.65px;width:23.0px;height:1px;background:#bcbcbc"></div>
<div style="left:115.2px;top:208.65px;width:121.4px;height:1px;background:#f1f1f1"></div>
<div style="left:92.2px;top:222.48px;width:23.0px;height:1px;background:#bcbcbc"></div>
<div style="left:115.2px;top:222.48px;width:121.4px;height:1px;background:#f1f1f1"></div>
<div style="left:92.2px;top:236.31px;width:23.0px;height:1px;background:#bcbcbc"></div>
<div style="left:115.2px;top:236.31px;width:121.4px;height:1px;background:#f1f1f1"></div>
<div style="left:92.2px;top:250.14px;width:23.0px;height:1px;background:#bcbcbc"></div>
<div style="left:115.2px;top:250.14px;width:121.4px;height:1px;background:#f1f1f1"></div>
<div style="left:92.2px;top:263.97px;width:23.0px;height:1px;background:#bcbcbc"></div>
<div style="left:115.2px;top:263.97px;width:121.4px;height:1px;background:#f1f1f1"></div>
<div style="left:92.2px;top:277.8px;width:23.0px;height:1px;background:#bcbcbc"></div>
<div style="left:115.2px;top:277.8px;width:121.4px;height:1px;background:#f1f1f1"></div>
<div style="left:92.2px;top:291.63px;width:23.0px;height:1px;background:#bcbcbc"></div>
<div style="left:115.2px;top:291.63px;width:121.4px;height:1px;background:#f1f1f1"></div>
<div style="left:92.2px;top:305.46px;width:23.0px;height:1px;background:#bcbcbc"></div>
<div style="left:115.2px;top:305.46px;width:121.4px;height:1px;background:#f1f1f1"></div>
<div style="left:92.2px;top:319.29px;width:23.0px;height:1px;background:#bcbcbc"></div>
<div style="left:115.2px;top:319.29px;width:121.4px;height:1px;background:#f1f1f1"></div>
<div style="left:236.6px;top:319.29px;width:95.3px;height:1px;background:#f4f4f4"></div>
<div style="left:92.2px;top:333.12px;width:23.0px;height:1px;background:#bcbcbc"></div>
<div style="left:115.2px;top:333.12px;width:121.4px;height:1px;background:#f1f1f1"></div>
<div style="left:236.6px;top:333.12px;width:95.3px;height:1px;background:#f4f4f4"></div>
<div style="left:92.2px;top:346.95px;width:23.0px;height:1px;background:#bcbcbc"></div>
<div style="left:115.2px;top:346.95px;width:121.4px;height:1px;background:#f1f1f1"></div>
<div style="left:236.6px;top:346.95px;width:95.3px;height:1px;background:#f4f4f4"></div>
<div style="left:92.2px;top:360.78px;width:23.0px;height:1px;background:#bcbcbc"></div>
<div style="left:115.2px;top:360.78px;width:121.4px;height:1px;background:#f1f1f1"></div>
<div style="left:236.6px;top:360.78px;width:95.3px;height:1px;background:#f4f4f4"></div>
<div style="left:92.2px;top:374.61px;width:23.0px;height:1px;background:#bcbcbc"></div>
<div style="left:115.2px;top:374.61px;width:121.4px;height:1px;background:#f1f1f1"></div>
<div style="left:236.6px;top:374.61px;width:95.3px;height:1px;background:#f4f4f4"></div>
<div style="left:92.2px;top:388.44px;width:23.0px;height:1px;background:#bcbcbc"></div>
<div style="left:115.2px;top:388.44px;width:121.4px;height:1px;background:#f1f1f1"></div>
<div style="left:236.6px;top:388.44px;width:95.3px;height:1px;background:#f4f4f4"></div>
<div style="left:92.2px;top:402.27px;width:23.0px;height:1px;background:#bcbcbc"></div>
<div style="left:115.2px;top:402.27px;width:121.4px;height:1px;background:#f1f1f1"></div>
<div style="left:236.6px;top:402.27px;width:95.3px;height:1px;background:#f4f4f4"></div>
<div style="left:92.2px;top:416.1px;width:23.0px;height:1px;background:#bcbcbc"></div>
<div style="left:115.2px;top:416.1px;width:121.4px;height:1px;background:#f1f1f1"></div>
<div style="left:236.6px;top:416.1px;width:95.3px;height:1px;background:#f4f4f4"></div>
<div style="left:92.2px;top:429.93px;width:23.0px;height:1px;background:#bcbcbc"></div>
<div style="left:115.2px;top:429.93px;width:121.4px;height:1px;background:#f1f1f1"></div>
<div style="left:236.6px;top:429.93px;width:95.3px;height:1px;background:#f4f4f4"></div>
<div style="left:92.2px;top:443.76px;width:23.0px;height:1px;background:#bcbcbc"></div>
<div style="left:115.2px;top:443.76px;width:121.4px;height:1px;background:#f1f1f1"></div>
<div style="left:236.6px;top:443.76px;width:95.3px;height:1px;background:#f4f4f4"></div>
<div style="left:92.2px;top:457.59px;width:23.0px;height:1px;background:#bcbcbc"></div>
<div style="left:115.2px;top:457.59px;width:121.4px;height:1px;background:#f1f1f1"></div>
<div style="left:236.6px;top:457.59px;width:95.3px;height:1px;background:#f4f4f4"></div>
<div style="left:252.3px;top:305.96px;width:1px;height:155.74px;background:#f4f4f4"></div>
<div style="left:279.4px;top:305.96px;width:1px;height:155.74px;background:#f4f4f4"></div>
<div style="left:306.4px;top:305.96px;width:1px;height:155.74px;background:#f4f4f4"></div>
<div class="t" style="left:92.2px;top:128px;font-size:7px;color:#222;width:23.0px;text-align:center;">1</div>
<div class="t" style="left:130.6px;top:128px;font-size:6.9px;color:#222;width:104.8px;text-align:left;overflow:hidden;letter-spacing:-0.05px;">Not enought information about con</div>
<div class="t" style="left:92.2px;top:141px;font-size:7px;color:#222;width:23.0px;text-align:center;">2</div>
<div class="t" style="left:130.6px;top:141px;font-size:6.9px;color:#222;width:104.8px;text-align:left;overflow:hidden;letter-spacing:-0.05px;">Delay in Financing</div>
<div class="t" style="left:92.2px;top:155px;font-size:7px;color:#222;width:23.0px;text-align:center;">3</div>
<div class="t" style="left:130.6px;top:155px;font-size:6.9px;color:#222;width:104.8px;text-align:left;overflow:hidden;letter-spacing:-0.05px;">Other risks, related to the project</div>
<div class="t" style="left:92.2px;top:169px;font-size:7px;color:#222;width:23.0px;text-align:center;">4</div>
<div class="t" style="left:130.6px;top:169px;font-size:6.9px;color:#222;width:104.8px;text-align:left;overflow:hidden;letter-spacing:-0.05px;">Risks affecting whole company/dir</div>
<div class="t" style="left:92.2px;top:183px;font-size:7px;color:#222;width:23.0px;text-align:center;">5</div>
<div class="t" style="left:130.6px;top:183px;font-size:6.9px;color:#222;width:104.8px;text-align:left;overflow:hidden;letter-spacing:-0.05px;">Delay in patent and trademark sea</div>
<div class="t" style="left:92.2px;top:197px;font-size:7px;color:#222;width:23.0px;text-align:center;">6</div>
<div class="t" style="left:130.6px;top:197px;font-size:6.9px;color:#222;width:104.8px;text-align:left;overflow:hidden;letter-spacing:-0.05px;">Cost information is not available</div>
<div class="t" style="left:92.2px;top:211px;font-size:7px;color:#222;width:23.0px;text-align:center;">7</div>
<div class="t" style="left:130.6px;top:211px;font-size:6.9px;color:#222;width:104.8px;text-align:left;overflow:hidden;letter-spacing:-0.05px;">Delay in getting level advice</div>
<div class="t" style="left:92.2px;top:224px;font-size:7px;color:#222;width:23.0px;text-align:center;">8</div>
<div class="t" style="left:130.6px;top:224px;font-size:6.9px;color:#222;width:104.8px;text-align:left;overflow:hidden;letter-spacing:-0.05px;">Lack of knowledge of the specific</div>
<div class="t" style="left:92.2px;top:238px;font-size:7px;color:#222;width:23.0px;text-align:center;">9</div>
<div class="t" style="left:130.6px;top:238px;font-size:6.9px;color:#222;width:104.8px;text-align:left;overflow:hidden;letter-spacing:-0.05px;">Not enough data to analyze demar</div>
<div class="t" style="left:92.2px;top:252px;font-size:7px;color:#222;width:23.0px;text-align:center;">10</div>
<div class="t" style="left:130.6px;top:252px;font-size:6.9px;color:#222;width:104.8px;text-align:left;overflow:hidden;letter-spacing:-0.05px;">Not enough data to plan manageme</div>
<div class="t" style="left:92.2px;top:266px;font-size:7px;color:#222;width:23.0px;text-align:center;">11</div>
<div class="t" style="left:130.6px;top:266px;font-size:6.9px;color:#222;width:104.8px;text-align:left;overflow:hidden;letter-spacing:-0.05px;">Problem with hiring</div>
<div class="t" style="left:92.2px;top:280px;font-size:7px;color:#222;width:23.0px;text-align:center;">12</div>
<div class="t" style="left:130.6px;top:280px;font-size:6.9px;color:#222;width:104.8px;text-align:left;overflow:hidden;letter-spacing:-0.05px;">Selected name is taken</div>
<div class="t" style="left:92.2px;top:294px;font-size:7px;color:#222;width:23.0px;text-align:center;">13</div>
<div class="t" style="left:130.6px;top:294px;font-size:6.9px;color:#222;width:104.8px;text-align:left;overflow:hidden;letter-spacing:-0.05px;">Staff turnover</div>
<svg style="left:0px;top:0px" width="768" height="486" viewBox="0 0 768 486"><rect x="253.4" y="125.89999999999999" width="78.49999999999997" height="180.26" fill="#e9f3e2"/><rect x="254.0" y="126.6" width="26.0" height="13.15" fill="#dc584e"/><rect x="280.75" y="126.6" width="26.25" height="13.15" fill="#e2de58"/><rect x="307.75" y="126.6" width="24.15" height="13.15" fill="#dc584e"/><rect x="117.55" y="129.95" width="8.3" height="7.4" rx="0.9" fill="#c6d6f8" stroke="#6f92e6" stroke-width="0.9"/><path d="M121.6 130.15L125.5 133.65L121.6 137.15L117.69999999999999 133.65Z" fill="#f6d424" stroke="#eea028" stroke-width="0.5"/><circle cx="121.6" cy="132.65" r="1.35" fill="#ea3a22"/><circle cx="121.6" cy="135.5" r="0.8" fill="#ea3a22"/><rect x="254.0" y="140.4" width="26.0" height="13.18" fill="#e2de58"/><rect x="280.75" y="140.4" width="26.25" height="13.18" fill="#e2de58"/><rect x="307.75" y="140.4" width="24.15" height="13.18" fill="#e2de58"/><rect x="117.55" y="143.78" width="8.3" height="7.4" rx="0.9" fill="#c6d6f8" stroke="#6f92e6" stroke-width="0.9"/><path d="M121.6 143.98L125.5 147.48L121.6 150.98L117.69999999999999 147.48Z" fill="#f6d424" stroke="#eea028" stroke-width="0.5"/><circle cx="121.6" cy="146.48" r="1.35" fill="#ea3a22"/><circle cx="121.6" cy="149.33" r="0.8" fill="#ea3a22"/><rect x="254.0" y="154.23" width="26.0" height="13.18" fill="#70d868"/><rect x="280.75" y="154.23" width="26.25" height="13.18" fill="#e2de58"/><rect x="307.75" y="154.23" width="24.15" height="13.18" fill="#e2de58"/><rect x="117.55" y="157.61" width="8.3" height="7.4" rx="0.9" fill="#c6d6f8" stroke="#6f92e6" stroke-width="0.9"/><path d="M121.6 157.81L125.5 161.31L121.6 164.81L117.69999999999999 161.31Z" fill="#f6d424" stroke="#eea028" stroke-width="0.5"/><circle cx="121.6" cy="160.31" r="1.35" fill="#ea3a22"/><circle cx="121.6" cy="163.16" r="0.8" fill="#ea3a22"/><rect x="254.0" y="168.06" width="26.0" height="13.18" fill="#70d868"/><rect x="280.75" y="168.06" width="26.25" height="13.18" fill="#70d868"/><rect x="307.75" y="168.06" width="24.15" height="13.18" fill="#70d868"/><rect x="117.55" y="171.44" width="8.3" height="7.4" rx="0.9" fill="#c6d6f8" stroke="#6f92e6" stroke-width="0.9"/><path d="M121.6 171.64L125.5 175.14L121.6 178.64L117.69999999999999 175.14Z" fill="#f6d424" stroke="#eea028" stroke-width="0.5"/><circle cx="121.6" cy="174.14" r="1.35" fill="#ea3a22"/><circle cx="121.6" cy="176.99" r="0.8" fill="#ea3a22"/><rect x="254.0" y="181.89" width="26.0" height="13.18" fill="#70d868"/><rect x="280.75" y="181.89" width="26.25" height="13.18" fill="#70d868"/><rect x="307.75" y="181.89" width="24.15" height="13.18" fill="#70d868"/><rect x="117.55" y="185.27" width="8.3" height="7.4" rx="0.9" fill="#c6d6f8" stroke="#6f92e6" stroke-width="0.9"/><path d="M121.6 185.47L125.5 188.97L121.6 192.47L117.69999999999999 188.97Z" fill="#f6d424" stroke="#eea028" stroke-width="0.5"/><circle cx="121.6" cy="187.97" r="1.35" fill="#ea3a22"/><circle cx="121.6" cy="190.82" r="0.8" fill="#ea3a22"/><rect x="254.0" y="195.72" width="26.0" height="13.18" fill="#e2de58"/><rect x="280.75" y="195.72" width="26.25" height="13.18" fill="#70d868"/><rect x="307.75" y="195.72" width="24.15" height="13.18" fill="#70d868"/><rect x="117.55" y="199.1" width="8.3" height="7.4" rx="0.9" fill="#c6d6f8" stroke="#6f92e6" stroke-width="0.9"/><path d="M121.6 199.3L125.5 202.8L121.6 206.3L117.69999999999999 202.8Z" fill="#f6d424" stroke="#eea028" stroke-width="0.5"/><circle cx="121.6" cy="201.8" r="1.35" fill="#ea3a22"/><circle cx="121.6" cy="204.65" r="0.8" fill="#ea3a22"/><rect x="254.0" y="209.55" width="26.0" height="13.18" fill="#dc584e"/><rect x="280.75" y="209.55" width="26.25" height="13.18" fill="#70d868"/><rect x="307.75" y="209.55" width="24.15" height="13.18" fill="#e2de58"/><rect x="117.55" y="212.93" width="8.3" height="7.4" rx="0.9" fill="#c6d6f8" stroke="#6f92e6" stroke-width="0.9"/><path d="M121.6 213.13L125.5 216.63L121.6 220.13L117.69999999999999 216.63Z" fill="#f6d424" stroke="#eea028" stroke-width="0.5"/><circle cx="121.6" cy="215.63" r="1.35" fill="#ea3a22"/><circle cx="121.6" cy="218.48" r="0.8" fill="#ea3a22"/><rect x="254.0" y="223.38" width="26.0" height="13.18" fill="#70d868"/><rect x="280.75" y="223.38" width="26.25" height="13.18" fill="#70d868"/><rect x="307.75" y="223.38" width="24.15" height="13.18" fill="#004f1c"/><rect x="117.55" y="226.76" width="8.3" height="7.4" rx="0.9" fill="#c6d6f8" stroke="#6f92e6" stroke-width="0.9"/><path d="M121.6 226.96L125.5 230.46L121.6 233.96L117.69999999999999 230.46Z" fill="#f6d424" stroke="#eea028" stroke-width="0.5"/><circle cx="121.6" cy="229.46" r="1.35" fill="#ea3a22"/><circle cx="121.6" cy="232.31" r="0.8" fill="#ea3a22"/><rect x="254.0" y="237.21" width="26.0" height="13.18" fill="#dc584e"/><rect x="280.75" y="237.21" width="26.25" height="13.18" fill="#70d868"/><rect x="307.75" y="237.21" width="24.15" height="13.18" fill="#e2de58"/><rect x="117.55" y="240.59" width="8.3" height="7.4" rx="0.9" fill="#c6d6f8" stroke="#6f92e6" stroke-width="0.9"/><path d="M121.6 240.79L125.5 244.29L121.6 247.79L117.69999999999999 244.29Z" fill="#f6d424" stroke="#eea028" stroke-width="0.5"/><circle cx="121.6" cy="243.29" r="1.35" fill="#ea3a22"/><circle cx="121.6" cy="246.14" r="0.8" fill="#ea3a22"/><rect x="254.0" y="251.04" width="26.0" height="13.18" fill="#70d868"/><rect x="280.75" y="251.04" width="26.25" height="13.18" fill="#70d868"/><rect x="307.75" y="251.04" width="24.15" height="13.18" fill="#70d868"/><rect x="117.55" y="254.42" width="8.3" height="7.4" rx="0.9" fill="#c6d6f8" stroke="#6f92e6" stroke-width="0.9"/><path d="M121.6 254.62L125.5 258.12L121.6 261.62L117.69999999999999 258.12Z" fill="#f6d424" stroke="#eea028" stroke-width="0.5"/><circle cx="121.6" cy="257.12" r="1.35" fill="#ea3a22"/><circle cx="121.6" cy="259.97" r="0.8" fill="#ea3a22"/><rect x="254.0" y="264.87" width="26.0" height="13.18" fill="#70d868"/><rect x="280.75" y="264.87" width="26.25" height="13.18" fill="#70d868"/><rect x="307.75" y="264.87" width="24.15" height="13.18" fill="#004f1c"/><rect x="117.55" y="268.25" width="8.3" height="7.4" rx="0.9" fill="#c6d6f8" stroke="#6f92e6" stroke-width="0.9"/><path d="M121.6 268.45L125.5 271.95L121.6 275.45L117.69999999999999 271.95Z" fill="#f6d424" stroke="#eea028" stroke-width="0.5"/><circle cx="121.6" cy="270.95" r="1.35" fill="#ea3a22"/><circle cx="121.6" cy="273.8" r="0.8" fill="#ea3a22"/><rect x="254.0" y="278.7" width="26.0" height="13.18" fill="#70d868"/><rect x="280.75" y="278.7" width="26.25" height="13.18" fill="#70d868"/><rect x="307.75" y="278.7" width="24.15" height="13.18" fill="#70d868"/><rect x="117.55" y="282.08" width="8.3" height="7.4" rx="0.9" fill="#c6d6f8" stroke="#6f92e6" stroke-width="0.9"/><path d="M121.6 282.28L125.5 285.78L121.6 289.28L117.69999999999999 285.78Z" fill="#f6d424" stroke="#eea028" stroke-width="0.5"/><circle cx="121.6" cy="284.78" r="1.35" fill="#ea3a22"/><circle cx="121.6" cy="287.63" r="0.8" fill="#ea3a22"/><rect x="254.0" y="292.53" width="26.0" height="13.18" fill="#70d868"/><rect x="280.75" y="292.53" width="26.25" height="13.18" fill="#70d868"/><rect x="307.75" y="292.53" width="24.15" height="13.18" fill="#004f1c"/><rect x="117.55" y="295.91" width="8.3" height="7.4" rx="0.9" fill="#c6d6f8" stroke="#6f92e6" stroke-width="0.9"/><path d="M121.6 296.11L125.5 299.61L121.6 303.11L117.69999999999999 299.61Z" fill="#f6d424" stroke="#eea028" stroke-width="0.5"/><circle cx="121.6" cy="298.61" r="1.35" fill="#ea3a22"/><circle cx="121.6" cy="301.46" r="0.8" fill="#ea3a22"/></svg>
<div class="t" style="left:255.4px;top:128px;font-size:7px;color:#1c1c08;">5</div>
<div class="t" style="left:282.15px;top:128px;font-size:7px;color:#1c1c08;">3</div>
<div class="t" style="left:309.15px;top:128px;font-size:7px;color:#1c1c08;">15</div>
<div class="t" style="left:255.4px;top:142px;font-size:7px;color:#1c1c08;">4</div>
<div class="t" style="left:282.15px;top:142px;font-size:7px;color:#1c1c08;">3</div>
<div class="t" style="left:309.15px;top:142px;font-size:7px;color:#1c1c08;">12</div>
<div class="t" style="left:255.4px;top:155px;font-size:7px;color:#1c1c08;">2</div>
<div class="t" style="left:282.15px;top:155px;font-size:7px;color:#1c1c08;">4</div>
<div class="t" style="left:309.15px;top:155px;font-size:7px;color:#1c1c08;">8</div>
<div class="t" style="left:255.4px;top:169px;font-size:7px;color:#1c1c08;">1</div>
<div class="t" style="left:282.15px;top:169px;font-size:7px;color:#1c1c08;">2</div>
<div class="t" style="left:309.15px;top:169px;font-size:7px;color:#1c1c08;">2</div>
<div class="t" style="left:255.4px;top:183px;font-size:7px;color:#1c1c08;">2</div>
<div class="t" style="left:282.15px;top:183px;font-size:7px;color:#1c1c08;">1</div>
<div class="t" style="left:309.15px;top:183px;font-size:7px;color:#1c1c08;">2</div>
<div class="t" style="left:255.4px;top:197px;font-size:7px;color:#1c1c08;">3</div>
<div class="t" style="left:255.4px;top:211px;font-size:7px;color:#1c1c08;">5</div>
<div class="t" style="left:255.4px;top:225px;font-size:7px;color:#1c1c08;">1</div>
<div class="t" style="left:255.4px;top:238px;font-size:7px;color:#1c1c08;">5</div>
<div class="t" style="left:255.4px;top:252px;font-size:7px;color:#1c1c08;">2</div>
<div class="t" style="left:255.4px;top:266px;font-size:7px;color:#1c1c08;">1</div>
<div class="t" style="left:255.4px;top:280px;font-size:7px;color:#1c1c08;">2</div>
<div class="t" style="left:255.4px;top:294px;font-size:7px;color:#1c1c08;">1</div>
<div style="left:114.6px;top:112px;width:1.2px;height:349.7px;background:#858585"></div>
<div style="left:92.2px;top:112px;width:239.7px;height:13.9px;background:#f0f0f0;border-top:1.3px solid #6c6c6c;border-bottom:1.3px solid #5c5c5c"></div>
<div style="left:114.6px;top:112px;width:1.2px;height:13.9px;background:#4a4a4a"></div>
<div style="left:236.0px;top:112px;width:1.2px;height:13.9px;background:#4a4a4a"></div>
<div style="left:252.2px;top:112px;width:1.2px;height:13.9px;background:#4a4a4a"></div>
<div style="left:279.3px;top:112px;width:1.2px;height:13.9px;background:#4a4a4a"></div>
<div style="left:306.3px;top:112px;width:1.2px;height:13.9px;background:#4a4a4a"></div>
<div class="t" style="left:116.7px;top:114px;font-size:7px;color:#222;width:109.1px;text-align:center;">Risk Name</div>
<div class="t" style="left:255.5px;top:114px;font-size:7px;color:#222;width:13px;text-align:left;overflow:hidden">Prob</div>
<div class="t" style="left:282.3px;top:114px;font-size:7px;color:#222;width:12.8px;text-align:left;overflow:hidden">Impa</div>
<div class="t" style="left:309.7px;top:114px;font-size:7px;color:#222;width:12.5px;text-align:left;overflow:hidden">Scor</div>
<div style="left:224.3px;top:114px;width:9.9px;height:9.8px;background:#fcfcfc;border:1px solid #d4d8e0;border-right-color:#bcc0c8;border-bottom-color:#bcc0c8"></div>
<svg style="left:227.05px;top:117.9px" width="4.4" height="2.5" viewBox="0 0 4.4 2.5"><path d="M0 0H4.4L2.2 2.5Z" fill="#6a6a6a"/></svg>
<div style="left:240.4px;top:114px;width:10.2px;height:9.8px;background:#fcfcfc;border:1px solid #d4d8e0;border-right-color:#bcc0c8;border-bottom-color:#bcc0c8"></div>
<svg style="left:243.3px;top:117.9px" width="4.4" height="2.5" viewBox="0 0 4.4 2.5"><path d="M0 0H4.4L2.2 2.5Z" fill="#6a6a6a"/></svg>
<div style="left:267.9px;top:114px;width:9.9px;height:9.8px;background:#fcfcfc;border:1px solid #d4d8e0;border-right-color:#bcc0c8;border-bottom-color:#bcc0c8"></div>
<svg style="left:270.65px;top:117.9px" width="4.4" height="2.5" viewBox="0 0 4.4 2.5"><path d="M0 0H4.4L2.2 2.5Z" fill="#6a6a6a"/></svg>
<div style="left:294.6px;top:114px;width:9.9px;height:9.8px;background:#fcfcfc;border:1px solid #d4d8e0;border-right-color:#bcc0c8;border-bottom-color:#bcc0c8"></div>
<svg style="left:297.35px;top:117.9px" width="4.4" height="2.5" viewBox="0 0 4.4 2.5"><path d="M0 0H4.4L2.2 2.5Z" fill="#6a6a6a"/></svg>
<div style="left:321.6px;top:114px;width:10.1px;height:9.8px;background:#fcfcfc;border:1px solid #d4d8e0;border-right-color:#bcc0c8;border-bottom-color:#bcc0c8"></div>
<svg style="left:324.45px;top:117.9px" width="4.4" height="2.5" viewBox="0 0 4.4 2.5"><path d="M0 0H4.4L2.2 2.5Z" fill="#6a6a6a"/></svg>
<div style="left:332.2px;top:112.5px;width:9.8px;height:349.2px;background:#f7f7f7"></div>
<div style="left:332.2px;top:113px;width:9.7px;height:9.4px;background:#f0f0f0;border:1px solid #fff;border-right:1.1px solid #555;border-bottom:1.1px solid #555"></div>
<svg style="left:0px;top:0px" width="1" height="1" viewBox="0 0 1 1"><path d="M334.35 118.5H339.15L336.75 115.9Z" fill="#000"/></svg>
<div style="left:332.2px;top:452px;width:9.7px;height:9.4px;background:#f0f0f0;border:1px solid #fff;border-right:1.1px solid #555;border-bottom:1.1px solid #555"></div>
<svg style="left:0px;top:0px" width="1" height="1" viewBox="0 0 1 1"><path d="M334.35 455.29999999999995H339.15L336.75 457.9Z" fill="#000"/></svg>
<div style="left:332.2px;top:122.3px;width:9.7px;height:10.2px;background:#f0f0f0;border:1px solid #fff;border-right:1.1px solid #666;border-bottom:1.1px solid #666"></div>
<div style="left:92.2px;top:461.7px;width:239.7px;height:10.4px;background:#f7f7f7"></div>
<div style="left:92.2px;top:461.7px;width:10.8px;height:10.3px;background:#f0f0f0;border:1px solid #fff;border-right:1.1px solid #555;border-bottom:1.1px solid #555"></div>
<svg style="left:0px;top:0px" width="1" height="1" viewBox="0 0 1 1"><path d="M98.50000000000001 464.34999999999997V468.74999999999994L95.70000000000002 466.54999999999995Z" fill="#000"/></svg>
<div style="left:321.3px;top:461.7px;width:10.7px;height:10.3px;background:#f0f0f0;border:1px solid #fff;border-right:1.1px solid #555;border-bottom:1.1px solid #555"></div>
<svg style="left:0px;top:0px" width="1" height="1" viewBox="0 0 1 1"><path d="M325.15000000000003 464.34999999999997V468.74999999999994L327.95000000000005 466.54999999999995Z" fill="#000"/></svg>
<div style="left:103px;top:461.7px;width:10.7px;height:10.3px;background:#f0f0f0;border:1px solid #fff;border-right:1.1px solid #666;border-bottom:1.1px solid #666"></div>
<div style="left:331.9px;top:461.9px;width:10.3px;height:10.2px;background:#fff"></div>
<div style="left:93.6px;top:95px;width:13.4px;height:12.7px;background:#d3dff4;border:1px solid #b2c5e8;border-radius:1.6px"></div>
<div style="left:109.3px;top:95px;width:13.4px;height:12.7px;background:#d3dff4;border:1px solid #b2c5e8;border-radius:1.6px"></div>
<div style="left:125.3px;top:95px;width:13.3px;height:12.7px;background:#f9c468;border:1px solid #f2b04a;border-radius:1.6px"></div>
<div style="left:140.6px;top:95px;width:13.4px;height:12.7px;background:#d3dff4;border:1px solid #b2c5e8;border-radius:1.6px"></div>
<svg style="left:0px;top:0px" width="768" height="486" viewBox="0 0 768 486"><path d="M103.8 97.5V105" stroke="#111" stroke-width="0.8"/><path d="M102.39999999999999 103.4H105.2L103.8 105.6Z" fill="#111"/><path d="M119.5 97.5V105" stroke="#111" stroke-width="0.8"/><path d="M118.1 103.4H120.9L119.5 105.6Z" fill="#111"/><path d="M135.5 97.5V105" stroke="#111" stroke-width="0.8"/><path d="M134.1 103.4H136.9L135.5 105.6Z" fill="#111"/><path d="M150.6 97.5V105" stroke="#111" stroke-width="0.8"/><path d="M149.2 103.4H152.0L150.6 105.6Z" fill="#111"/><rect x="127.3" y="97.2" width="5.2" height="1.9" fill="#3f78e4"/><rect x="129" y="100" width="3.5" height="1.9" fill="#3f78e4"/><rect x="129" y="102.8" width="3.5" height="2.2" fill="#6c9af0"/></svg>
<div class="t" style="left:95.6px;top:93px;font-size:6.2px;color:#2a4fb0;width:5px;text-align:center;font-weight:bold;font-family:&quot;Liberation Serif&quot;,serif;">A</div>
<div class="t" style="left:95.6px;top:98px;font-size:6.2px;color:#b02a3a;width:5px;text-align:center;font-weight:bold;font-family:&quot;Liberation Serif&quot;,serif;">Z</div>
<div class="t" style="left:111.3px;top:93px;font-size:6.2px;color:#b02a3a;width:5px;text-align:center;font-weight:bold;font-family:&quot;Liberation Serif&quot;,serif;">Z</div>
<div class="t" style="left:111.3px;top:98px;font-size:6.2px;color:#2a4fb0;width:5px;text-align:center;font-weight:bold;font-family:&quot;Liberation Serif&quot;,serif;">A</div>
<div class="t" style="left:141.6px;top:96px;font-size:6.6px;color:#2a3a70;width:8px;text-align:center;letter-spacing:-0.3px;">ID</div>
<div style="left:216.8px;top:95.6px;width:94.2px;height:12.4px;background:#fff;border:1.2px solid #666;border-right-color:#bbb;border-bottom-color:#bbb"></div>
<div class="t" style="left:219.7px;top:97px;font-size:7px;color:#222;">No Hierarchy</div>
<div style="left:301px;top:97.2px;width:9.2px;height:10px;background:#f0f0f0;border:1px solid #fff;border-right:1.1px solid #555;border-bottom:1.1px solid #555"></div>
<svg style="left:303.5px;top:101.2px" width="4.2" height="2.4" viewBox="0 0 4.2 2.4"><path d="M0 0H4.2L2.1 2.4Z" fill="#000"/></svg>
<div style="left:345px;top:91px;width:423px;height:381.2px;background:#f0f0f0"></div>
<div style="left:346px;top:92px;width:422px;height:19.5px;background:#fff"></div>
<svg style="left:0px;top:0px" width="768" height="486" viewBox="0 0 768 486"><rect x="345.3" y="90.6" width="423" height="1.6" fill="#484848"/><rect x="345.2" y="90.6" width="1.4" height="381.6" fill="#787878"/><rect x="346.6" y="110.7" width="421.4" height="1.25" fill="#505050"/></svg>
<div style="left:441.1px;top:95.8px;width:11.8px;height:11.8px;border-radius:50%;border:1px solid #4a4a4a;background:#fff"></div>
<div style="left:442.9px;top:97.6px;width:8.2px;height:8.2px;border-radius:50%;background:radial-gradient(circle at 32% 30%,#d4d4d4 0,#7c7c7c 42%,#1e1e1e 100%)"></div>
<div style="left:556.0px;top:95.8px;width:11.8px;height:11.8px;border-radius:50%;border:1px solid #4a4a4a;background:#fff"></div>
<div style="left:557.3px;top:97.1px;width:9.2px;height:9.2px;border-radius:50%;background:radial-gradient(circle at 40% 35%,#fdfdfd,#dcdcdc)"></div>
<div class="t" style="left:456.5px;top:96px;font-size:6.85px;color:#222;">Threats</div>
<div class="t" style="left:571.3px;top:96px;font-size:6.8px;color:#222;">Opportunities</div>
<div class="t" style="left:349.2px;top:117px;font-size:7.1px;color:#222;">Number</div>
<div class="t" style="left:349.2px;top:125px;font-size:7.1px;color:#222;">of Risks</div>
<div style="left:384.3px;top:142.2px;width:368.5px;height:272.2px;background:#fff"></div>
<div class="t" style="left:365px;top:365px;font-size:7.1px;color:#222;width:13.9px;text-align:right;">1</div>
<div class="t" style="left:365px;top:322px;font-size:7.1px;color:#222;width:13.9px;text-align:right;">2</div>
<div class="t" style="left:365px;top:279px;font-size:7.1px;color:#222;width:13.9px;text-align:right;">3</div>
<div class="t" style="left:365px;top:236px;font-size:7.1px;color:#222;width:13.9px;text-align:right;">4</div>
<div class="t" style="left:365px;top:193px;font-size:7.1px;color:#222;width:13.9px;text-align:right;">5</div>
<div class="t" style="left:365px;top:150px;font-size:7.1px;color:#222;width:13.9px;text-align:right;">6</div>
<div class="t" style="left:365px;top:408px;font-size:7.1px;color:#222;width:13.9px;text-align:right;">0</div>
<div style="left:392px;top:129.3px;width:22.6px;height:8.4px;background:#1a7a3e;border-bottom:1.2px solid #0c5a28;border-right:1.2px solid #0c5a28"></div>
<div class="t" style="left:423px;top:128px;font-size:7.1px;color:#222;">Very Low</div>
<div style="left:460.6px;top:129.3px;width:22.8px;height:8.4px;background:#2dab62;border-bottom:1.2px solid #1c8a4a;border-right:1.2px solid #1c8a4a"></div>
<div class="t" style="left:491.9px;top:128px;font-size:7.1px;color:#222;">Low</div>
<div style="left:530.3px;top:129.3px;width:22.9px;height:8.4px;background:#f6c068;border-bottom:1.2px solid #e2a040;border-right:1.2px solid #e2a040"></div>
<div class="t" style="left:561px;top:128px;font-size:7.1px;color:#222;">Medium</div>
<div style="left:599px;top:129.3px;width:22.4px;height:8.4px;background:#f51818;border-bottom:1.2px solid #d40a0a;border-right:1.2px solid #d40a0a"></div>
<div class="t" style="left:630px;top:128px;font-size:7.1px;color:#222;">Critical</div>
<svg style="left:0px;top:0px" width="768" height="486" viewBox="0 0 768 486"><rect x="385.3" y="370.42" width="366.5" height="1" fill="#f2f2f2"/><rect x="381.6" y="370.42" width="2.7" height="1" fill="#777"/><rect x="385.3" y="327.43" width="366.5" height="1" fill="#f2f2f2"/><rect x="381.6" y="327.43" width="2.7" height="1" fill="#777"/><rect x="385.3" y="284.45" width="366.5" height="1" fill="#f2f2f2"/><rect x="381.6" y="284.45" width="2.7" height="1" fill="#777"/><rect x="385.3" y="241.47" width="366.5" height="1" fill="#f2f2f2"/><rect x="381.6" y="241.47" width="2.7" height="1" fill="#777"/><rect x="385.3" y="198.48" width="366.5" height="1" fill="#f2f2f2"/><rect x="381.6" y="198.48" width="2.7" height="1" fill="#777"/><rect x="385.3" y="155.5" width="366.5" height="1" fill="#f2f2f2"/><rect x="381.6" y="155.5" width="2.7" height="1" fill="#777"/><rect x="424.64" y="143.2" width="1" height="270.7" fill="#f2f2f2"/><rect x="424.64" y="414.29999999999995" width="1" height="2.2" fill="#666"/><rect x="461.08" y="143.2" width="1" height="270.7" fill="#f2f2f2"/><rect x="461.08" y="414.29999999999995" width="1" height="2.2" fill="#666"/><rect x="497.52" y="143.2" width="1" height="270.7" fill="#f2f2f2"/><rect x="497.52" y="414.29999999999995" width="1" height="2.2" fill="#666"/><rect x="533.96" y="143.2" width="1" height="270.7" fill="#f2f2f2"/><rect x="533.96" y="414.29999999999995" width="1" height="2.2" fill="#666"/><rect x="570.4" y="143.2" width="1" height="270.7" fill="#f2f2f2"/><rect x="570.4" y="414.29999999999995" width="1" height="2.2" fill="#666"/><rect x="606.84" y="143.2" width="1" height="270.7" fill="#f2f2f2"/><rect x="606.84" y="414.29999999999995" width="1" height="2.2" fill="#666"/><rect x="643.28" y="143.2" width="1" height="270.7" fill="#f2f2f2"/><rect x="643.28" y="414.29999999999995" width="1" height="2.2" fill="#666"/><rect x="679.72" y="143.2" width="1" height="270.7" fill="#f2f2f2"/><rect x="679.72" y="414.29999999999995" width="1" height="2.2" fill="#666"/><rect x="716.16" y="143.2" width="1" height="270.7" fill="#f2f2f2"/><rect x="716.16" y="414.29999999999995" width="1" height="2.2" fill="#666"/><rect x="383.8" y="141.7" width="1" height="272.7" fill="#a4a4a4"/><rect x="383.8" y="141.7" width="369.0" height="1" fill="#a8a8a8"/><rect x="752.1999999999999" y="141.7" width="1" height="272.7" fill="#b0b0b0"/><rect x="383.8" y="413.79999999999995" width="369.0" height="0.9" fill="#a0a0a0"/><defs><linearGradient id="bg0" x1="0" x2="1" y1="0" y2="0"><stop offset="0%" stop-color="#1b7c41"/><stop offset="68%" stop-color="#1a7a40"/><stop offset="90%" stop-color="#0c5826"/><stop offset="100%" stop-color="#0b5425"/></linearGradient><linearGradient id="bg1" x1="0" x2="1" y1="0" y2="0"><stop offset="0%" stop-color="#3fcb7b"/><stop offset="14%" stop-color="#2bac61"/><stop offset="80%" stop-color="#29a85e"/><stop offset="93%" stop-color="#1f8a4c"/><stop offset="100%" stop-color="#1f8a4c"/></linearGradient><linearGradient id="bg2" x1="0" x2="1" y1="0" y2="0"><stop offset="0%" stop-color="#f9d08e"/><stop offset="28%" stop-color="#f3ba62"/><stop offset="66%" stop-color="#f1b65c"/><stop offset="88%" stop-color="#dc9a38"/><stop offset="100%" stop-color="#d99634"/></linearGradient><linearGradient id="bg3" x1="0" x2="1" y1="0" y2="0"><stop offset="0%" stop-color="#ff3232"/><stop offset="30%" stop-color="#f61616"/><stop offset="80%" stop-color="#f41414"/><stop offset="100%" stop-color="#e20e0e"/></linearGradient></defs><rect x="392.1" y="242.47" width="6.9" height="171.43" fill="url(#bg0)"/><rect x="399.1" y="156.5" width="6.45" height="257.4" fill="url(#bg1)"/><rect x="406.1" y="285.45" width="6.45" height="128.45" fill="url(#bg2)"/><rect x="428.54" y="242.47" width="6.9" height="171.43" fill="url(#bg0)"/><rect x="435.54" y="156.5" width="6.45" height="257.4" fill="url(#bg1)"/><rect x="442.54" y="285.45" width="6.45" height="128.45" fill="url(#bg2)"/><rect x="464.98" y="242.47" width="6.9" height="171.43" fill="url(#bg0)"/><rect x="471.98" y="156.5" width="6.45" height="257.4" fill="url(#bg1)"/><rect x="478.98" y="285.45" width="6.45" height="128.45" fill="url(#bg2)"/><rect x="501.42" y="242.47" width="6.9" height="171.43" fill="url(#bg0)"/><rect x="508.42" y="156.5" width="6.45" height="257.4" fill="url(#bg1)"/><rect x="515.42" y="285.45" width="6.45" height="128.45" fill="url(#bg2)"/><rect x="537.86" y="242.47" width="6.9" height="171.43" fill="url(#bg0)"/><rect x="544.86" y="156.5" width="6.45" height="257.4" fill="url(#bg1)"/><rect x="551.86" y="285.45" width="6.45" height="128.45" fill="url(#bg2)"/><rect x="574.3" y="242.47" width="6.9" height="171.43" fill="url(#bg0)"/><rect x="581.3" y="156.5" width="6.45" height="257.4" fill="url(#bg1)"/><rect x="588.3" y="285.45" width="6.45" height="128.45" fill="url(#bg2)"/><rect x="610.74" y="285.45" width="6.9" height="128.45" fill="url(#bg0)"/><rect x="617.74" y="199.48" width="6.45" height="214.42" fill="url(#bg1)"/><rect x="624.74" y="242.47" width="6.45" height="171.43" fill="url(#bg2)"/><rect x="631.74" y="371.42" width="6.45" height="42.48" fill="url(#bg3)"/><rect x="647.18" y="285.45" width="6.9" height="128.45" fill="url(#bg0)"/><rect x="654.18" y="199.48" width="6.45" height="214.42" fill="url(#bg1)"/><rect x="661.18" y="242.47" width="6.45" height="171.43" fill="url(#bg2)"/><rect x="668.18" y="371.42" width="6.45" height="42.48" fill="url(#bg3)"/><rect x="683.62" y="285.45" width="6.9" height="128.45" fill="url(#bg0)"/><rect x="690.62" y="199.48" width="6.45" height="214.42" fill="url(#bg1)"/><rect x="697.62" y="242.47" width="6.45" height="171.43" fill="url(#bg2)"/><rect x="704.62" y="371.42" width="6.45" height="42.48" fill="url(#bg3)"/><rect x="720.06" y="285.45" width="6.9" height="128.45" fill="url(#bg0)"/><rect x="727.06" y="199.48" width="6.45" height="214.42" fill="url(#bg1)"/><rect x="734.06" y="242.47" width="6.45" height="171.43" fill="url(#bg2)"/><rect x="741.06" y="371.42" width="6.45" height="42.48" fill="url(#bg3)"/></svg>
<div class="t" style="left:386.72px;top:415px;font-size:7.1px;color:#222;width:40px;text-align:center;">July</div>
<div class="t" style="left:386.72px;top:426px;font-size:6.8px;color:#222;width:40px;text-align:center;">2021</div>
<div class="t" style="left:423.16px;top:415px;font-size:7.1px;color:#222;width:40px;text-align:center;">August</div>
<div class="t" style="left:423.16px;top:426px;font-size:6.8px;color:#222;width:40px;text-align:center;">2021</div>
<div class="t" style="left:459.6px;top:415px;font-size:7.1px;color:#222;width:40px;text-align:center;">Sep</div>
<div class="t" style="left:459.6px;top:426px;font-size:6.8px;color:#222;width:40px;text-align:center;">2021</div>
<div class="t" style="left:496.04px;top:415px;font-size:7.1px;color:#222;width:40px;text-align:center;">October</div>
<div class="t" style="left:496.04px;top:426px;font-size:6.8px;color:#222;width:40px;text-align:center;">2021</div>
<div class="t" style="left:532.48px;top:415px;font-size:7.1px;color:#222;width:40px;text-align:center;">November</div>
<div class="t" style="left:532.48px;top:426px;font-size:6.8px;color:#222;width:40px;text-align:center;">2021</div>
<div class="t" style="left:568.92px;top:415px;font-size:7.1px;color:#222;width:40px;text-align:center;">December</div>
<div class="t" style="left:568.92px;top:426px;font-size:6.8px;color:#222;width:40px;text-align:center;">2021</div>
<div class="t" style="left:605.36px;top:415px;font-size:7.1px;color:#222;width:40px;text-align:center;">January</div>
<div class="t" style="left:605.36px;top:426px;font-size:6.8px;color:#222;width:40px;text-align:center;">2022</div>
<div class="t" style="left:641.8px;top:415px;font-size:7.1px;color:#222;width:40px;text-align:center;">February</div>
<div class="t" style="left:641.8px;top:426px;font-size:6.8px;color:#222;width:40px;text-align:center;">2022</div>
<div class="t" style="left:678.24px;top:415px;font-size:7.1px;color:#222;width:40px;text-align:center;">March</div>
<div class="t" style="left:678.24px;top:426px;font-size:6.8px;color:#222;width:40px;text-align:center;">2022</div>
<div class="t" style="left:714.68px;top:415px;font-size:7.1px;color:#222;width:40px;text-align:center;">April</div>
<div class="t" style="left:714.68px;top:426px;font-size:6.8px;color:#222;width:40px;text-align:center;">2022</div>
<svg style="left:0px;top:0px" width="768" height="486" viewBox="0 0 768 486"><path d="M354.7 142 L361.9 164.4 H359.5 V414 H350.3 V164.4 H347.4 Z" fill="#dedede" stroke="#9a9a9a" stroke-width="0.7"/></svg>
<div style="left:346.6px;top:452.2px;width:421.4px;height:20.3px;background:#fff;border-top:1.1px solid #333;border-bottom:1px solid #ededed"></div>
<div style="left:374.3px;top:452.2px;width:98.6px;height:16.6px;background:#f0f0f0;border:1.1px solid #222;border-top:none"></div>
<div style="left:475.4px;top:452.8px;width:99.6px;height:12.8px;background:#dedede;border:1.1px solid #444;"></div>
<div class="t" style="left:374.3px;top:454px;font-size:6.9px;color:#222;width:98.6px;text-align:center;">Risk Trend</div>
<div class="t" style="left:475.4px;top:454px;font-size:6.8px;color:#222;width:98.8px;text-align:center;">Total Risks</div>
<div class="t" style="left:517.3px;top:475px;font-size:6.9px;color:#222;">Risk Trend</div>
<div class="t" style="left:604.9px;top:475px;font-size:6.9px;color:#222;width:21.5px;text-align:center;">CAP</div>
<div class="t" style="left:621.3px;top:475px;font-size:6.9px;color:#222;width:25.0px;text-align:center;">NUM</div>
<div class="t" style="left:640.8px;top:475px;font-size:6.9px;color:#222;width:25.4px;text-align:center;">SCRL</div>
<div class="t" style="left:660.7px;top:475px;font-size:6.9px;color:#222;width:61.3px;text-align:center;">Sat, Apr 30,2022</div>
<div class="t" style="left:715.9px;top:475px;font-size:6.9px;color:#222;width:43.8px;text-align:center;">5:39:28 AM</div>
<svg style="left:0px;top:0px" width="768" height="486" viewBox="0 0 768 486"><rect x="766.3" y="90" width="2" height="384" fill="#fff"/><rect x="766" y="112" width="0.6" height="360" fill="#f4f4f4"/><rect x="765.4" y="478.7" width="1.1" height="1.1" fill="#777"/><rect x="766.1999999999999" y="479.5" width="0.8" height="0.8" fill="#d0d0d0"/><rect x="763" y="481.1" width="1.1" height="1.1" fill="#777"/><rect x="763.8" y="481.90000000000003" width="0.8" height="0.8" fill="#d0d0d0"/><rect x="765.4" y="481.1" width="1.1" height="1.1" fill="#777"/><rect x="766.1999999999999" y="481.90000000000003" width="0.8" height="0.8" fill="#d0d0d0"/><rect x="760.6" y="483.5" width="1.1" height="1.1" fill="#777"/><rect x="761.4" y="484.3" width="0.8" height="0.8" fill="#d0d0d0"/><rect x="763" y="483.5" width="1.1" height="1.1" fill="#777"/><rect x="763.8" y="484.3" width="0.8" height="0.8" fill="#d0d0d0"/><rect x="765.4" y="483.5" width="1.1" height="1.1" fill="#777"/><rect x="766.1999999999999" y="484.3" width="0.8" height="0.8" fill="#d0d0d0"/></svg>
</body></html>
